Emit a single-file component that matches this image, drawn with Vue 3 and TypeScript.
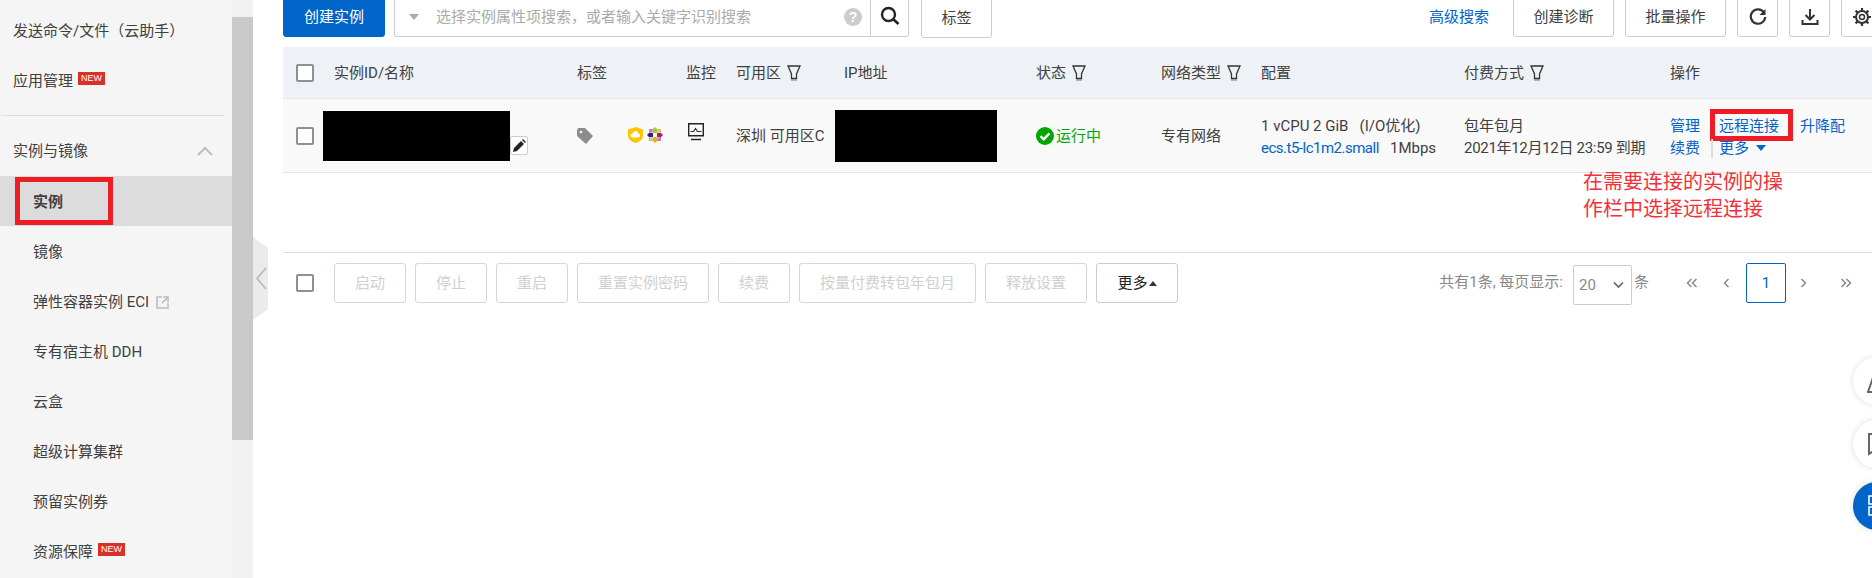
<script setup lang="ts">
interface MenuItem { label: string; badge?: boolean; external?: boolean; active?: boolean }
const menu: MenuItem[] = [
  { label: '实例', active: true },
  { label: '镜像' },
  { label: '弹性容器实例 ECI', external: true },
  { label: '专有宿主机 DDH' },
  { label: '云盒' },
  { label: '超级计算集群' },
  { label: '预留实例券' },
  { label: '资源保障', badge: true },
]
const footerButtons: string[] = ['启动', '停止', '重启', '重置实例密码', '续费', '按量付费转包年包月', '释放设置']
const headers: { label: string; filter?: boolean }[] = [
  { label: '' },
  { label: '实例ID/名称' },
  { label: '标签' },
  { label: '监控' },
  { label: '可用区', filter: true },
  { label: 'IP地址' },
  { label: '状态', filter: true },
  { label: '网络类型', filter: true },
  { label: '配置' },
  { label: '付费方式', filter: true },
  { label: '操作' },
]
</script>

<template>
  <div class="page">
    <aside class="aside">
      <nav class="nav">
        <div class="item top">发送命令/文件（云助手）</div>
        <div class="item top">应用管理<span class="new">NEW</span></div>
        <div class="rule"></div>
        <div class="item top group">
          <span>实例与镜像</span>
          <svg class="caret" width="16" height="10" viewBox="0 0 16 10"><path d="M1 9 8 2l7 7" fill="none" stroke="#bdbdbd" stroke-width="2" /></svg>
        </div>
        <div v-for="m in menu" :key="m.label" class="item sub" :class="{ active: m.active }">
          <span>{{ m.label }}</span>
          <span v-if="m.badge" class="new">NEW</span>
          <svg v-if="m.external" class="ext" width="13" height="13" viewBox="0 0 13 13"><path d="M6 1H1v11h11V7M7 1h5v5M12 1 6 7" fill="none" stroke="#bdbdbd" stroke-width="1.6" /></svg>
          <i v-if="m.active" class="mark nav-mark"></i>
        </div>
      </nav>
      <div class="track"><div class="thumb"></div></div>
      <svg class="handle" width="15" height="83" viewBox="0 0 15 83">
        <path d="M0 0 15 11V72L0 83Z" fill="#ebebeb" />
        <path d="M13 31 4 41.500l9 10.500" fill="none" stroke="#bcbcbc" stroke-width="1.800" />
      </svg>
    </aside>

    <main class="main">
      <div class="toolbar">
        <button class="btn primary">创建实例</button>
        <div class="search">
          <i class="tri"></i>
          <span class="placeholder">选择实例属性项搜索，或者输入关键字识别搜索</span>
          <span class="help">?</span>
        </div>
        <button class="btn search-btn">
          <svg width="20" height="20" viewBox="0 0 20 20"><circle cx="8.500" cy="8.500" r="6.500" fill="none" stroke="#222" stroke-width="2.400" /><path d="M13 13l5.500 5" stroke="#222" stroke-width="2.600" /></svg>
        </button>
        <button class="btn tag">标签</button>
        <a class="adv">高级搜索</a>
        <button class="btn wide">创建诊断</button>
        <button class="btn wide">批量操作</button>
        <button class="btn square">
          <svg width="18" height="18" viewBox="0 0 18 18"><path d="M15 4.500A7.200 7.200 0 1 0 16.200 9" fill="none" stroke="#333" stroke-width="2.200" /><path d="M16.500 1v6h-6z" fill="#333" /></svg>
        </button>
        <button class="btn square">
          <svg width="18" height="18" viewBox="0 0 18 18"><path d="M9 1v10M4.500 7 9 11.500 13.500 7M1.500 12v4h15v-4" fill="none" stroke="#333" stroke-width="2" /></svg>
        </button>
        <button class="btn square">
          <svg width="18" height="18" viewBox="0 0 18 18"><circle cx="9" cy="9" r="6" fill="none" stroke="#333" stroke-width="2" /><circle cx="9" cy="9" r="2.500" fill="none" stroke="#333" stroke-width="1.500" /><path d="M9 0v3M9 15v3M0 9h3M15 9h3M2.600 2.600l2.200 2.200M13.200 13.200l2.200 2.200M2.600 15.400l2.200-2.200M13.200 4.800l2.200-2.200" stroke="#333" stroke-width="2.200" /></svg>
        </button>
      </div>

      <div class="grid head">
        <div v-for="(h, i) in headers" :key="i" class="cell">
          <i v-if="i === 0" class="check"></i>
          <span>{{ h.label }}</span>
          <svg v-if="h.filter" class="funnel" width="14" height="16" viewBox="0 0 14 16"><path d="M1 1h12L9.500 9v4.500h-5V9z" fill="none" stroke="#333" stroke-width="1.300" /><path d="M4 15h6" stroke="#888" stroke-width="1.200" /></svg>
        </div>
      </div>

      <div class="grid row">
        <div class="cell"><i class="check"></i></div>
        <div class="cell name">
          <i class="redact name-redact"></i>
          <span class="edit">
            <svg width="14" height="14" viewBox="0 0 14 14"><path d="M1 13l1-4 7-7 3 3-7 7z" fill="#222" /><path d="M10 1l1-1 3 3-1 1z" fill="#222" /></svg>
          </span>
        </div>
        <div class="cell icons">
          <svg class="tagicon" width="16" height="16" viewBox="0 0 16 16"><path d="M0 1.500 1.500 0H8l8 8-7 8-9-8z" fill="#8c8c8c" /><circle cx="4" cy="4" r="1.300" fill="#f9f9fa" /></svg>
          <svg class="shield" width="15" height="16" viewBox="0 0 15 16"><path d="M7.500 0 15 2.500V9c0 3.500-4 6-7.500 7C4 15 0 12.500 0 9V2.500z" fill="#fbc600" /><path d="M4.500 10.500a2 2 0 0 1 0-4 3 3 0 0 1 5.800-.3 2.200 2.200 0 0 1 .2 4.300z" fill="#fff" /></svg>
          <svg class="flower" width="16" height="16" viewBox="0 0 16 16">
            <path d="M8 0l2 2v4H6V2z" fill="#9ccd2a" />
            <path d="M16 8l-2 2h-4V6h4z" fill="#932279" />
            <path d="M8 16l-2-2v-4h4v4z" fill="#efa724" />
            <path d="M0 8l2-2h4v4H2z" fill="#262577" />
            <path d="M2 2h4l-.5 3.500L2 6zM14 14h-4l.5-3.500L14 10z" fill="#c77fb4" />
            <path d="M14 2v4l-3.500-.500L10 2zM2 14v-4l3.500.500L6 14z" fill="#d6c36a" />
          </svg>
        </div>
        <div class="cell">
          <svg class="monitor" width="16" height="18" viewBox="0 0 16 18"><path d="M.700.700h14.600v12H.700zM3 16.500h10" fill="none" stroke="#222" stroke-width="1.400" /><path d="M2.500 8.500h3l2-3 2 3h4" fill="none" stroke="#333" stroke-width="1.200" /></svg>
        </div>
        <div class="cell">深圳 可用区C</div>
        <div class="cell"><i class="redact ip-redact"></i></div>
        <div class="cell status">
          <svg width="18" height="18" viewBox="0 0 18 18"><circle cx="9" cy="9" r="9" fill="#00a700" /><path d="M4.500 9.200 7.700 12.200 13.500 6.300" fill="none" stroke="#fff" stroke-width="2.400" /></svg>
          <span>运行中</span>
        </div>
        <div class="cell">专有网络</div>
        <div class="cell stack">
          <div>1 vCPU 2 GiB&nbsp;&nbsp; (I/O优化)</div>
          <div><a class="spec">ecs.t5-lc1m2.small</a>&nbsp;&nbsp; 1Mbps</div>
        </div>
        <div class="cell stack">
          <div>包年包月</div>
          <div class="due">2021年12月12日 23:59 到期</div>
        </div>
        <div class="cell ops">
          <a class="op1">管理</a>
          <a class="op2 remote">远程连接<i class="mark op-mark"></i></a>
          <a class="op3">升降配</a>
          <a class="op1">续费</a>
          <a class="op2 more">更多<i class="down"></i></a>
          <span></span>
        </div>
      </div>

      <div class="note">在需要连接的实例的操<br />作栏中选择远程连接</div>

      <div class="rule-wide"></div>

      <div class="footer">
        <i class="check foot-check"></i>
        <button v-for="b in footerButtons" :key="b" class="btn off">{{ b }}</button>
        <button class="btn moreb">更多<i class="up"></i></button>
        <div class="pager">
          <span class="total">共有1条, 每页显示:</span>
          <span class="select"><span>20</span>
            <svg width="11" height="8" viewBox="0 0 11 8"><path d="M1 1.500 5.500 6 10 1.500" fill="none" stroke="#666" stroke-width="1.700" /></svg>
          </span>
          <span class="unit">条</span>
          <svg class="pg first" width="12" height="10" viewBox="0 0 12 10"><path d="M5.500 1 1.500 5l4 4M10.500 1l-4 4 4 4" fill="none" stroke="#888" stroke-width="1.500" /></svg>
          <svg class="pg prev" width="7" height="10" viewBox="0 0 7 10"><path d="M5.500 1 1.500 5l4 4" fill="none" stroke="#888" stroke-width="1.500" /></svg>
          <span class="cur">1</span>
          <svg class="pg next" width="7" height="10" viewBox="0 0 7 10"><path d="M1.500 1l4 4-4 4" fill="none" stroke="#888" stroke-width="1.500" /></svg>
          <svg class="pg last" width="12" height="10" viewBox="0 0 12 10"><path d="M1.500 1l4 4-4 4M6.500 1l4 4-4 4" fill="none" stroke="#888" stroke-width="1.500" /></svg>
        </div>
      </div>
    </main>

    <div class="fab f1"><svg width="24" height="26" viewBox="0 0 24 26"><path d="M9 1 1 24h22L15 8" fill="none" stroke="#666" stroke-width="2" /></svg></div>
    <div class="fab f2"><svg width="24" height="24" viewBox="0 0 24 24"><path d="M2 2h20v16H8l-6 4z" fill="none" stroke="#666" stroke-width="2" /></svg></div>
    <div class="fab f3"><svg width="24" height="24" viewBox="0 0 24 24"><path d="M2 2h8v8H2zM2 13h8v8H2z" fill="none" stroke="#fff" stroke-width="1.600" /></svg></div>
  </div>
</template>

<style>
html, body { margin: 0; background: #fff; overflow: hidden; }
</style>

<style scoped>
.page {
  position: relative;
  display: flex;
  width: 1872px;
  height: 578px;
  overflow: hidden;
  background: #fff;
  color: #404040;
  font: 15px/22px Roboto, "Noto Sans CJK SC", "Liberation Sans", sans-serif;
}
i { display: block; font-style: normal; }
a { color: #0064c8; }
.aside { position: relative; display: flex; flex: none; width: 253px; height: 578px; }
.nav { width: 232px; padding-top: 6px; background: #f5f5f5; }
.item { position: relative; display: flex; align-items: center; box-sizing: border-box; height: 50px; }
.top { padding-left: 13px; }
.sub { padding: 2px 0 0 33px; }
.group { justify-content: space-between; padding-right: 19px; }
.active { background: #dcdcdc; font-weight: 700; }
.rule { height: 1px; margin: 9px 8px 10px 1px; background: #dedede; }
.new {
  align-self: center;
  margin: -6px 0 0 5px;
  padding: 0 3px;
  background: #d9302a;
  color: #fff;
  font: 9px/13px "Liberation Sans", sans-serif;
}
.ext { margin-left: 7px; }
.mark { position: absolute; border: 5px solid #ee1c25; box-sizing: border-box; }
.nav-mark { left: 15px; top: 1px; width: 98px; height: 48px; }
.track { width: 21px; background: #f1f1f1; }
.thumb { height: 423px; margin-top: 17px; background: #c9c9c9; }
.handle { position: absolute; left: 253px; top: 237px; }

.main { flex: none; width: 1589px; margin-left: 30px; }
.toolbar { display: flex; width: 1599px; height: 37px; margin: -3px 0 13px; }
.btn {
  box-sizing: border-box;
  flex: none;
  height: 40px;
  padding: 0 20px;
  border: 1px solid #c9ccd2;
  border-radius: 3px;
  background: #fff;
  color: #404040;
  font: inherit;
}
.primary { width: 102px; border-color: #0064c8; background: #0064c8; color: #fff; }
.search {
  display: flex;
  align-items: center;
  box-sizing: border-box;
  width: 476px;
  height: 40px;
  margin-left: 9px;
  border: 1px solid #c9ccd2;
  border-right: 0;
  border-radius: 3px 0 0 3px;
  padding: 0 8px 0 14px;
}
.tri { width: 0; height: 0; border: 5px solid transparent; border-top: 6px solid #aaa; border-bottom: 0; }
.placeholder { flex: 1; margin-left: 17px; color: #aaa; }
.help {
  width: 18px;
  height: 18px;
  border-radius: 50%;
  background: #ccc;
  color: #fff;
  font: 700 14px/18px "Liberation Sans", sans-serif;
  text-align: center;
}
.search-btn { display: flex; align-items: center; justify-content: center; width: 39px; padding: 0 0 3px; border-radius: 0 3px 3px 0; }
.tag { width: 71px; height: 41px; margin-left: 12px; padding: 0; }
.adv { margin: 9px 24px 0 auto; color: #0064c8; }
.wide { width: 101px; margin-right: 11px; padding: 0; }
.square { display: flex; align-items: center; justify-content: center; width: 41px; margin-right: 11px; padding: 0; }
.square:last-child { margin-right: 0; }

.grid { display: grid; grid-template-columns: 51px 243px 109px 50px 108px 192px 125px 100px 203px 206px 202px; }
.cell { position: relative; display: flex; align-items: center; min-width: 0; white-space: nowrap; }
.head { height: 51px; border-bottom: 1px solid #e3e6eb; background: #eef1f6; }
.row { height: 73px; border-bottom: 1px solid #e3e6eb; background: #f9f9fa; }
.check { box-sizing: border-box; flex: none; width: 18px; height: 18px; margin-left: 13px; border: 2px solid #8f8f9c; border-radius: 2px; background: #fff; }
.funnel { margin-left: 6px; }
.redact { position: absolute; background: #000; }
.name-redact { left: -11px; top: 12px; width: 187px; height: 50px; }
.ip-redact { left: -9px; top: 11px; width: 162px; height: 52px; }
.edit {
  position: absolute;
  left: 176px;
  top: 37px;
  display: flex;
  align-items: center;
  justify-content: center;
  box-sizing: border-box;
  width: 18px;
  height: 19px;
  border: 1px solid #ccc;
  border-radius: 2px;
  background: #fff;
}
.icons { position: relative; }
.tagicon { position: absolute; left: 0; top: 29px; }
.shield { position: absolute; left: 51px; top: 28px; }
.flower { position: absolute; left: 70px; top: 28px; }
.monitor { margin: -7px 0 0 2px; }
.status { gap: 2px; color: #00a700; }
.stack { display: block; padding-top: 16px; }
.spec { letter-spacing: -.5px; }
.due { letter-spacing: -.3px; }
.ops { display: grid; grid-template-columns: 49px 81px auto; grid-auto-rows: 22px; align-content: start; padding-top: 16px; }
.remote { position: relative; }
.op-mark { left: -9px; top: -6px; width: 83px; height: 32px; }
.more { position: relative; display: flex; align-items: center; gap: 7px; }
.more::before { content: ""; position: absolute; left: -8px; top: 2px; width: 2px; height: 19px; background: #ddd; }
.down { width: 0; height: 0; border: 5px solid transparent; border-top: 6px solid #0064c8; border-bottom: 0; }
.note { height: 54px; margin: -4px 0 0 1300px; padding-bottom: 29px; color: #f3303a; font-size: 20px; line-height: 27px; }
.rule-wide { height: 1px; background: #ddd; }
.footer { display: flex; align-items: flex-start; gap: 9px; padding-top: 10px; }
.foot-check { margin: 11px 11px 0 13px; }
.off { border-color: #d3d6da; color: #d0d0d0; }
.moreb { display: flex; align-items: center; justify-content: center; gap: 1px; width: 82px; padding: 0; color: #222; }
.up { width: 0; height: 0; border: 4px solid transparent; border-bottom: 5px solid #333; border-top: 0; }
.pager { position: relative; display: flex; flex: none; height: 42px; margin-left: auto; color: #888; }
.total { margin: 8px 10px 0 0; }
.select {
  display: flex;
  align-items: center;
  justify-content: space-between;
  box-sizing: border-box;
  width: 59px;
  height: 40px;
  margin-top: 2px;
  padding: 0 7px 0 5px;
  border: 1px solid #ccc;
  border-radius: 2px;
}
.unit { margin: 8px 37px 0 2px; }
.pg { margin-top: 15px; }
.first { margin-right: 25px; }
.prev { margin-right: 16px; }
.cur {
  box-sizing: border-box;
  width: 40px;
  height: 40px;
  margin-right: 14px;
  border: 1px solid #0064c8;
  border-radius: 2px;
  color: #0064c8;
  line-height: 38px;
  text-align: center;
}
.next { margin-right: 33px; }
.last { margin-right: 20px; }
.fab {
  position: absolute;
  left: 1853px;
  display: flex;
  align-items: center;
  box-sizing: border-box;
  width: 48px;
  height: 48px;
  padding-left: 14px;
  border-radius: 50%;
  background: #fff;
  box-shadow: 0 0 6px rgba(0, 0, 0, .14);
}
.f1 { top: 357px; }
.f2 { top: 420px; }
.f3 { top: 482px; background: #0064c8; }
</style>
